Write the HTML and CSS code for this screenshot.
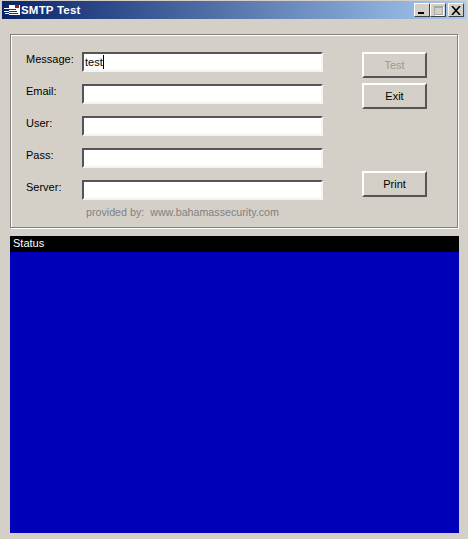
FILE: index.html
```html
<!DOCTYPE html>
<html lang="en">
<head>
  <meta charset="UTF-8">
  <meta name="viewport" content="width=device-width, initial-scale=1.0">
  <title>SMTP Test</title>
  <link rel="stylesheet" href="styles.css">
</head>
<body>
  <div class="titlebar">
    <svg class="app-icon" width="16" height="12" viewBox="0 0 16 12">
      <rect x="5" y="1" width="11" height="10" fill="#fff"/>
      <rect x="11" y="1" width="4" height="3" fill="#a01818"/>
      <path d="M0 4.500h5M0 7.500h5M1 9.500h4M6 2l4 3" stroke="#fff" stroke-width="1"/>
      <path d="M5 5.500h7M5 7.500h8M5 9.500h9" stroke="#30343c" stroke-width="1"/>
    </svg>
    <span class="title">SMTP Test</span>
    <div class="win-buttons">
      <div class="win-btn"><span class="glyph-min"></span></div>
      <div class="win-btn"><span class="glyph-max"></span></div>
      <div class="win-btn close">
        <svg width="10" height="9" viewBox="0 0 10 9"><path d="M1 0l8 9M9 0l-8 9" stroke="#000" stroke-width="1.6"/></svg>
      </div>
    </div>
  </div>

  <div class="panel">
    <div class="fields">
      <div class="row"><label>Message:</label><div class="input">test<span class="caret"></span></div></div>
      <div class="row"><label>Email:</label><div class="input"></div></div>
      <div class="row"><label>User:</label><div class="input"></div></div>
      <div class="row"><label>Pass:</label><div class="input"></div></div>
      <div class="row"><label>Server:</label><div class="input"></div></div>
      <div class="provided">provided by:&nbsp; www.bahamassecurity.com</div>
    </div>
    <div class="actions">
      <button class="btn" disabled>Test</button>
      <button class="btn">Exit</button>
      <button class="btn print">Print</button>
    </div>
  </div>

  <div class="status">
    <div class="status-head">Status</div>
    <div class="status-body"></div>
  </div>
</body>
</html>
```

FILE: styles.css
```css
html, body { height: 100%; }
body { margin: 0; background-color: #d4d0c8; color: #000; font-family: "Liberation Sans", Arial, sans-serif; font-size: 11px; overflow: hidden; box-sizing: border-box; padding-top: 1px; }

.titlebar { display: flex; align-items: center; height: 18px; margin: 0 2px; padding-left: 2px; background: linear-gradient(to right, #0a246a, #a6caf0); }
.app-icon { flex: none; }
.title { margin-left: 1px; color: #fff; font-weight: bold; font-size: 11.5px; letter-spacing: 0.2px; }
.win-buttons { display: flex; margin-left: auto; margin-right: 2px; }
.win-btn { width: 16px; height: 14px; box-sizing: border-box; display: flex; align-items: center; justify-content: center; background-color: #d4d0c8; border: 1px solid; border-color: #fff #404040 #404040 #fff; }
.win-btn.close { margin-left: 2px; }
.glyph-min { width: 6px; height: 2px; background-color: #000; margin-top: 6px; margin-right: 2px; }
.glyph-max { width: 9px; height: 9px; box-sizing: border-box; border: 1px solid #a8a8a4; border-top-width: 2px; box-shadow: 1px 1px #fff; }

.panel { display: flex; height: 194px; box-sizing: border-box; margin: 15px 10px 0 10px; padding: 17px 30px 0 14px; border: 1px solid #808080; box-shadow: inset 1px 1px #fff, 1px 1px #fff; }
.fields { width: 298px; }
.row { display: flex; align-items: flex-start; height: 20px; margin-bottom: 12px; }
.row label { width: 56px; flex: none; padding: 1px 0 0 1px; line-height: 13px; }
.input { width: 241px; height: 20px; box-sizing: border-box; padding-left: 1px; background-color: #fff; border: 2px solid; border-color: #555 #f4f4f2 #f4f4f2 #555; line-height: 16px; }
.caret { display: inline-block; width: 1px; height: 14px; background-color: #000; vertical-align: top; margin-top: 1px; }
.provided { margin: -7px 0 0 61px; color: #808080; font-size: 10.7px; line-height: 14px; }

.actions { display: flex; flex-direction: column; margin-left: 39px; }
.btn { width: 65px; height: 26px; padding: 0; background-color: #d4d0c8; color: #000; font: 11px "Liberation Sans", Arial, sans-serif; border: 2px solid; border-color: #fff #555 #555 #fff; margin-bottom: 5px; }
.btn:disabled { color: #9a9a96; }
.btn.print { margin-top: 57px; }

.status { display: flex; flex-direction: column; height: 297px; margin: 8px 9px 0 10px; }
.status-head { height: 16px; padding-left: 3px; background-color: #000; color: #fff; line-height: 14px; }
.status-body { flex: 1; background-color: #0000b8; }
```
